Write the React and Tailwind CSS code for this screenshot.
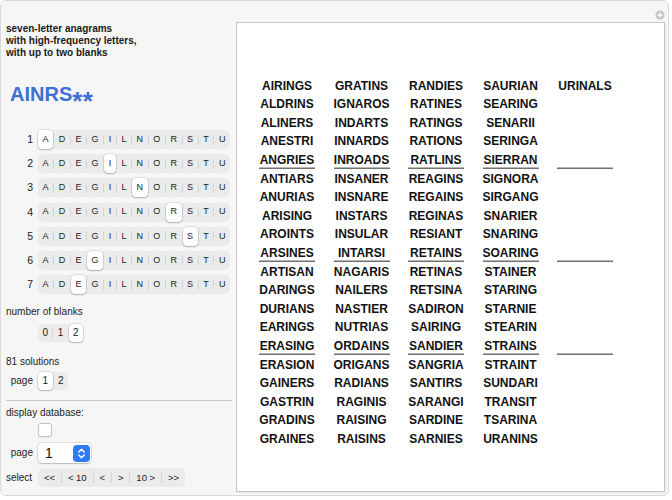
import React from "react";

const WORDS = [
  "AIRINGS","ALDRINS","ALINERS","ANESTRI","ANGRIES","ANTIARS","ANURIAS","ARISING","AROINTS","ARSINES","ARTISAN","DARINGS","DURIANS","EARINGS","ERASING","ERASION","GAINERS","GASTRIN","GRADINS","GRAINES",
  "GRATINS","IGNAROS","INDARTS","INNARDS","INROADS","INSANER","INSNARE","INSTARS","INSULAR","INTARSI","NAGARIS","NAILERS","NASTIER","NUTRIAS","ORDAINS","ORIGANS","RADIANS","RAGINIS","RAISING","RAISINS",
  "RANDIES","RATINES","RATINGS","RATIONS","RATLINS","REAGINS","REGAINS","REGINAS","RESIANT","RETAINS","RETINAS","RETSINA","SADIRON","SAIRING","SANDIER","SANGRIA","SANTIRS","SARANGI","SARDINE","SARNIES",
  "SAURIAN","SEARING","SENARII","SERINGA","SIERRAN","SIGNORA","SIRGANG","SNARIER","SNARING","SOARING","STAINER","STARING","STARNIE","STEARIN","STRAINS","STRAINT","SUNDARI","TRANSIT","TSARINA","URANINS",
  "URINALS",
];

const LETTERS = ["A","D","E","G","I","L","N","O","R","S","T","U"];
const SEL = [0, 4, 6, 8, 9, 3, 2];

function Bar({ items, sel, className, cellText }) {
  const out = [];
  items.forEach((it, i) => {
    if (i > 0) {
      const hide = i === sel || i - 1 === sel;
      out.push(
        <div
          key={"s" + i}
          className={
            "w-px h-[10px] self-center shrink-0 " +
            (hide ? "bg-transparent" : "bg-[#d4d4d4]")
          }
        />
      );
    }
    out.push(
      <div
        key={"c" + i}
        className={
          "grow flex items-center justify-center " +
          cellText +
          (i === sel
            ? " bg-white rounded-[4px] shadow-[0_0_0_0.5px_rgba(0,0,0,0.18),0_1px_1.5px_rgba(0,0,0,0.22)]"
            : "")
        }
      >
        {it}
      </div>
    );
  });
  return (
    <div className={"flex items-stretch rounded-[5px] bg-[#ebebeb] " + className}>
      {out}
    </div>
  );
}

function Label({ children }) {
  return (
    <div className="w-[27px] shrink-0 text-right text-[10px] leading-[12px] text-[#222]">
      {children}
    </div>
  );
}

export default function App() {
  const cols = [0, 1, 2, 3, 4].map((c) => {
    const arr = [];
    for (let r = 0; r < 20; r++) arr.push(WORDS[c * 20 + r] || "");
    return arr;
  });

  return (
    <div className="w-[672px] h-[500px] bg-white font-['Liberation_Sans',Arial,sans-serif]">
      <div className="relative w-[669px] h-[496px] rounded-[6px] border border-[#dadada] bg-[#f6f6f6] flex">
        {/* plus icon */}
        <div className="absolute left-[654px] top-[9px] w-[10px] h-[10px]">
          <svg width="10" height="10" viewBox="0 0 10 10">
            <circle cx="5" cy="5" r="4.5" fill="#c6c6c6" />
            <path d="M5 2.6V7.4M2.6 5H7.4" stroke="#fff" strokeWidth="1.3" />
          </svg>
        </div>

        {/* left panel */}
        <div className="w-[235px] shrink-0 pl-[5px] pt-[22px] flex flex-col">
          <div className="text-[10px] leading-[12px] font-bold text-[#1a1a1a]">
            <div>seven-letter anagrams</div>
            <div>with high-frequency letters,</div>
            <div>with up to two blanks</div>
          </div>

          <div className="mt-[25px] ml-[4px] h-[20px] flex items-start text-[20px] leading-[20px] font-bold text-[#3c6fd7]">
            <span>AINRS</span>
            <span className="text-[26px] leading-[20px] translate-y-[7px] tracking-[0.5px]">**</span>
          </div>

          <div className="mt-[26px] flex flex-col gap-[5.2px]">
            {SEL.map((s, i) => (
              <div key={i} className="flex items-center gap-[5px]">
                <Label>
                  <span className="text-[10.5px]">{i + 1}</span>
                </Label>
                <Bar
                  items={LETTERS}
                  sel={s}
                  className="w-[192px] h-[19px]"
                  cellText="text-[9px] text-[#222]"
                />
              </div>
            ))}
          </div>

          <div className="mt-[12.3px] text-[10px] leading-[12px] text-[#222]">
            number of blanks
          </div>
          <div className="mt-[5.5px] pl-[32px]">
            <Bar
              items={["0", "1", "2"]}
              sel={2}
              className="w-[45px] h-[18px]"
              cellText="text-[10px] text-[#222]"
            />
          </div>

          <div className="mt-[14px] text-[10px] leading-[12px] text-[#222]">
            81 solutions
          </div>
          <div className="mt-[4px] flex items-center gap-[5px]">
            <Label>page</Label>
            <Bar
              items={["1", "2"]}
              sel={0}
              className="w-[30px] h-[18px]"
              cellText="text-[10px] text-[#222]"
            />
          </div>

          <div className="mt-[10.5px] w-[226px] h-px bg-[#c9c9c9]" />

          <div className="mt-[5.7px] text-[10px] leading-[12px] text-[#222]">
            display database:
          </div>
          <div className="mt-[4px] pl-[32px]">
            <div className="w-[14px] h-[14px] rounded-[3px] bg-white border border-[#c4c4c4] shadow-[0_0.5px_1px_rgba(0,0,0,0.08)]" />
          </div>

          <div className="mt-[6.3px] flex items-center gap-[5px]">
            <Label>page</Label>
            <div className="w-[53px] h-[20px] rounded-[4px] bg-white shadow-[0_0_0_0.5px_rgba(0,0,0,0.2),0_1px_1.5px_rgba(0,0,0,0.15)] flex items-center justify-between pl-[7px] pr-[1px]">
              <span className="text-[14px] leading-[14px] text-[#111]">1</span>
              <div className="w-[17px] h-[17px] rounded-[4px] bg-[#2f7bf5] flex items-center justify-center">
                <svg width="9" height="13" viewBox="0 0 9 13">
                  <path d="M1.8 5L4.5 2.3L7.2 5M1.8 8L4.5 10.7L7.2 8" fill="none" stroke="#fff" strokeWidth="1.5" strokeLinecap="round" strokeLinejoin="round" />
                </svg>
              </div>
            </div>
          </div>

          <div className="mt-[5px] flex items-center gap-[5px]">
            <div className="w-[27px] shrink-0 text-[10px] leading-[12px] text-[#222]">select</div>
            <Bar
              items={["<<", "< 10", "<", ">", "10 >", ">>"]}
              sel={-1}
              className="w-[147px] h-[19px]"
              cellText="text-[9.5px] text-[#222] whitespace-pre"
            />
          </div>
        </div>

        {/* right panel */}
        <div className="mt-[21px] w-[429px] h-[470px] bg-white border border-[#c6c6c6] shadow-[1px_1px_0_rgba(0,0,0,0.06)] pl-[22px] pt-[53.4px] flex gap-[18.5px]">
          {cols.map((col, c) => (
            <div key={c} className="w-[56px] flex flex-col">
              {col.map((w, r) => (
                <div
                  key={r}
                  className={
                    "h-[18.6px] shrink-0 flex items-center justify-center text-[12px] leading-[14px] font-bold text-[#111] whitespace-nowrap" +
                    (r === 4 || r === 9 || r === 14
                      ? " shadow-[inset_0_-1.5px_0_#707070]"
                      : "")
                  }
                >
                  {w}
                </div>
              ))}
            </div>
          ))}
        </div>
      </div>
    </div>
  );
}
